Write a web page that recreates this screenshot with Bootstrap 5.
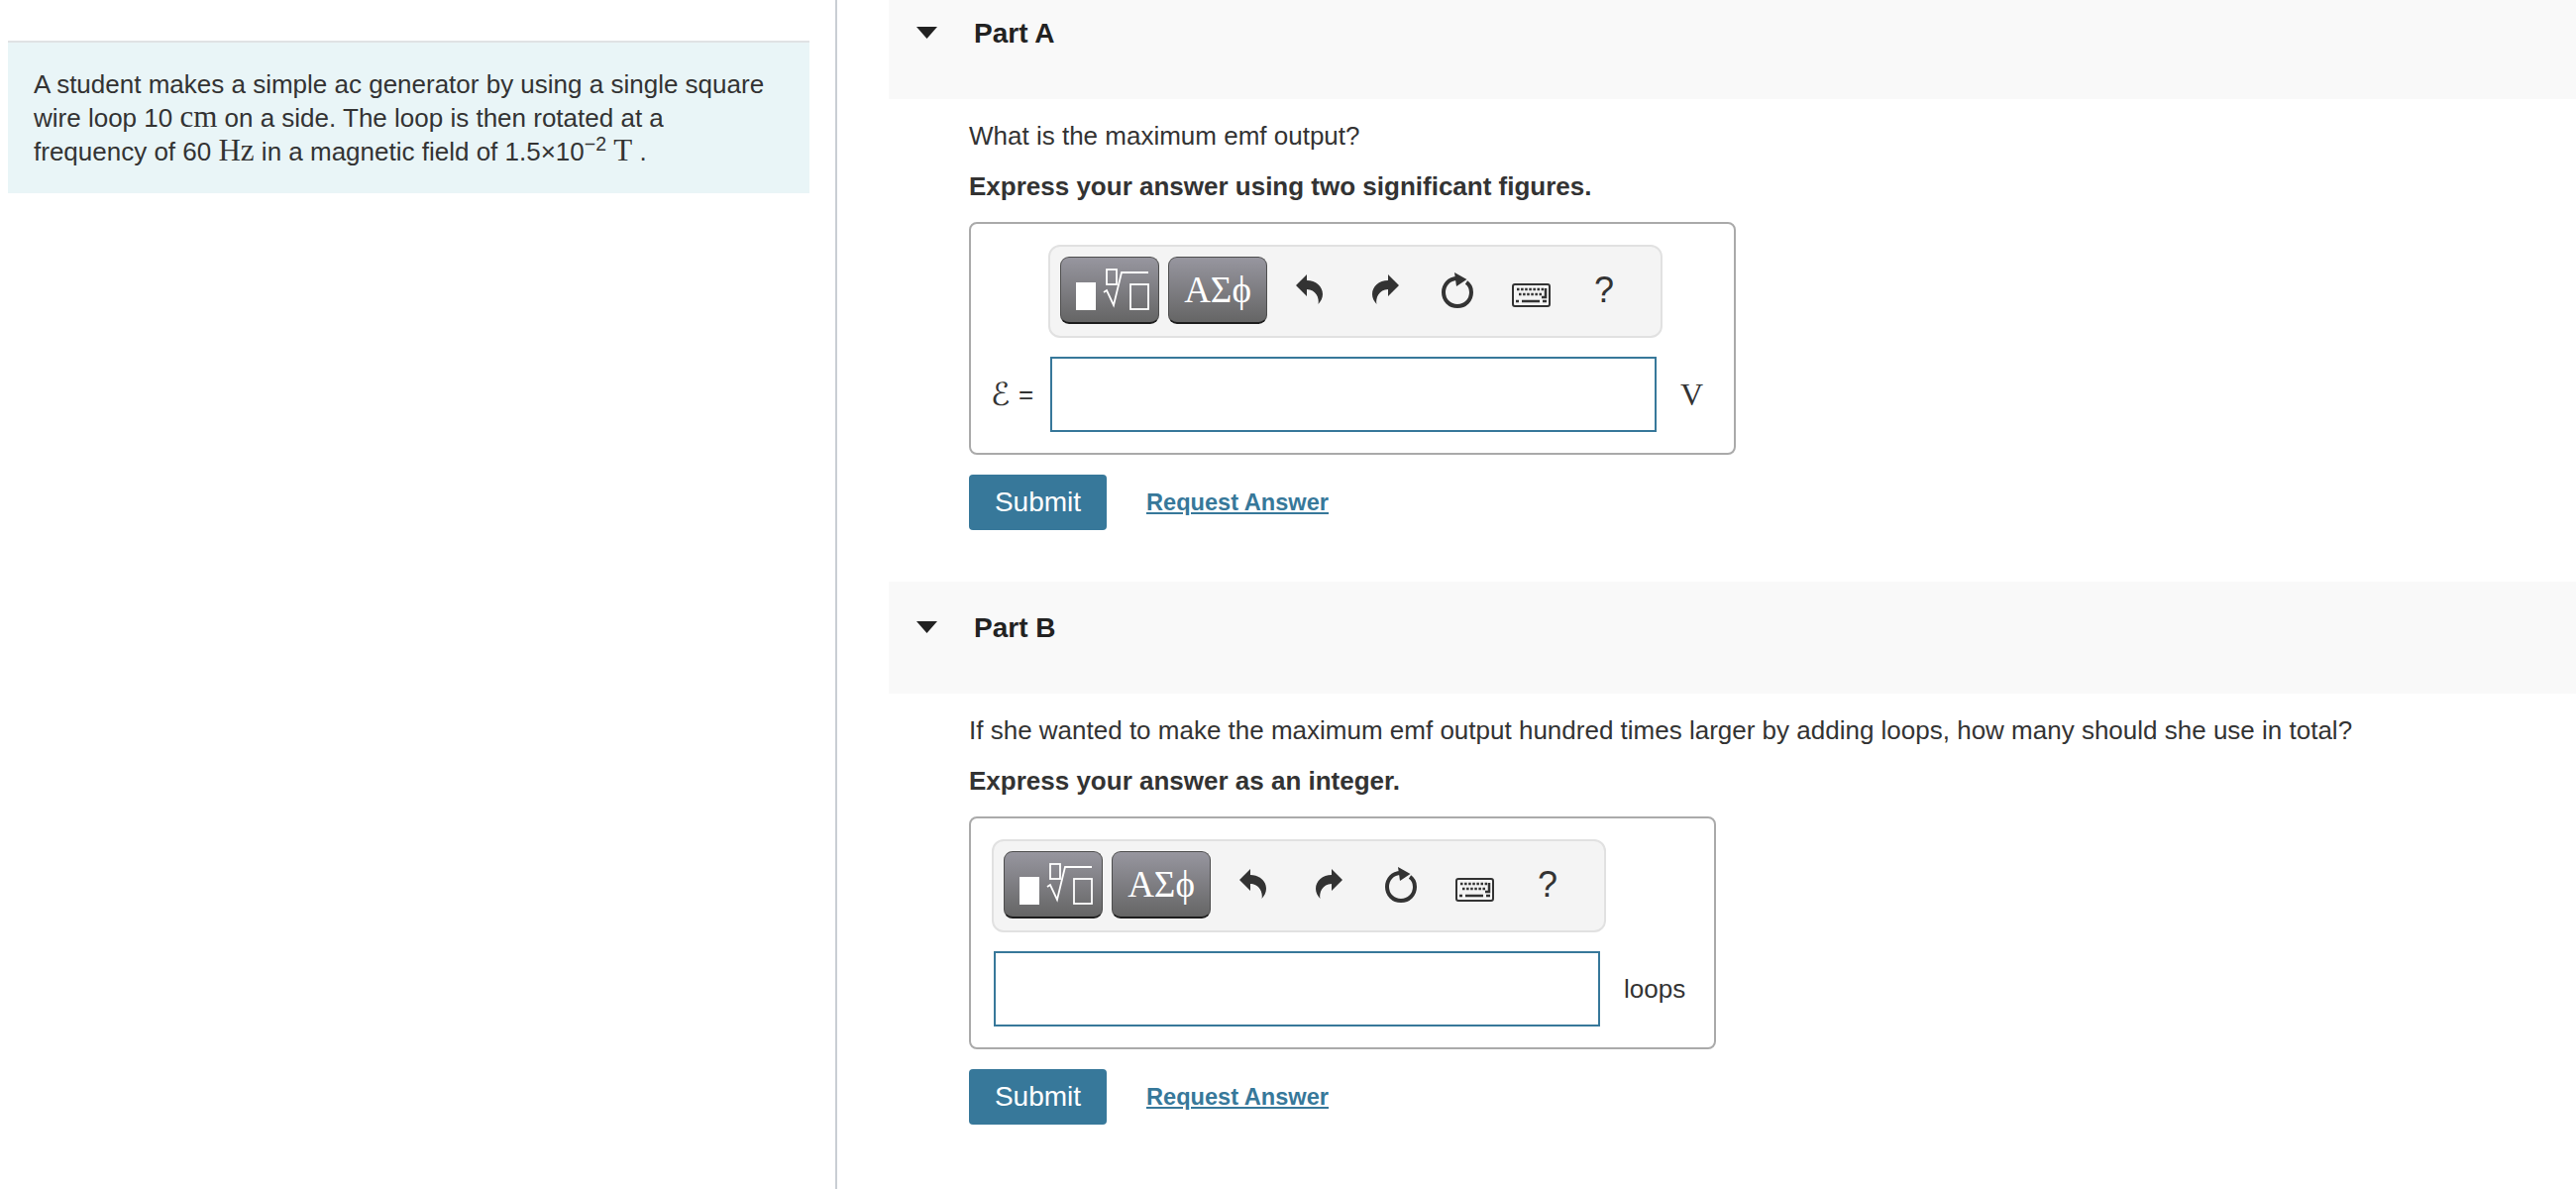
<!DOCTYPE html>
<html lang="en">
<head>
    <meta charset="UTF-8">
    <title>Part A and Part B</title>
    <link href="https://cdn.jsdelivr.net/npm/bootstrap@5.3.0/dist/css/bootstrap.min.css" rel="stylesheet">
    <style>
        body {
            font-family: "Liberation Sans", Arial, sans-serif;
            font-size: 26px;
            line-height: 34px;
            color: #333;
            background: #fff;
            height: 1200px;
            overflow: hidden;
        }
        .side-pane {
            width: 845px;
            height: 1200px;
            padding: 41px 26px 0 8px;
            border-right: 2px solid #c9ced4;
        }
        .intro-box {
            background: #e9f5f7;
            border-top: 2px solid #e0e2e4;
            height: 154px;
            padding: 25px 44px 0 26px;
        }
        .math-text { font-family: "Liberation Serif", serif; font-size: 31px; line-height: 30px; }
        .main-pane { margin-left: 52px; }
        .part-head {
            background: #f9f9f9;
            font-weight: 700;
            font-size: 28px;
            line-height: 34px;
            color: #222;
            padding-left: 28px;
            gap: 37px;
        }
        .head-a { height: 100px; padding-top: 17px; }
        .head-b { height: 113px; padding-top: 30px; margin-top: 52px; }
        .caret-icon { width: 21px; height: 12px; margin-top: 10px; }
        .part-body { padding-left: 81px; }
        .question-line { margin-top: 20px; }
        .hint-line { font-weight: 700; margin-top: 17px; }
        .answer-box {
            border: 2px solid #aaa;
            border-radius: 8px;
            margin-top: 19px;
            height: 235px;
            padding-top: 21px;
        }
        .box-a { width: 774px; }
        .box-b { width: 754px; margin-bottom: 1px; }
        .tool-tray {
            width: 620px;
            height: 94px;
            background: #f4f4f4;
            border: 2px solid #e1e1e1;
            border-radius: 12px;
            padding: 10px 0 0 10px;
            gap: 9px;
        }
        .box-a .tool-tray { margin-left: 78px; }
        .box-b .tool-tray { margin-left: 21px; }
        .tpl-btn {
            width: 100px;
            height: 68px;
            padding: 0;
            border: 1px solid #4e4e4e;
            border-bottom: 2px solid #1d1d1d;
            border-radius: 9px;
            background: linear-gradient(#97969f, #656565);
            color: #fff;
            font-family: "Liberation Serif", serif;
            font-size: 37px;
            line-height: 1;
        }
        .tpl-btn:hover { background: linear-gradient(#97969f, #656565); color: #fff; }
        .root-art { display: block; }
        .icon-undo { width: 27px; height: 30px; margin-top: 18px; margin-left: 20px; }
        .icon-redo { width: 27px; height: 30px; margin-top: 18px; margin-left: 41px; transform: scaleX(-1); }
        .icon-reload { width: 34px; height: 38px; margin-top: 16px; margin-left: 33px; }
        .icon-keys { width: 39px; height: 24px; margin-top: 27px; margin-left: 29px; }
        .help-mark { font-size: 36px; line-height: 38px; margin-top: 15px; margin-left: 35px; color: #333; }
        .input-row { margin-top: 19px; }
        .box-a .input-row { padding-left: 20px; }
        .box-b .input-row { padding-left: 23px; }
        .symbol-cell { width: 60px; gap: 6px; }
        .symbol-e { font-family: "DejaVu Sans", sans-serif; font-size: 32px; width: 22px; }
        .answer-input {
            width: 612px;
            height: 76px;
            border: 2px solid #37789a;
            border-radius: 0;
            padding: 0 10px;
            background: #fff;
            outline: none;
        }
        .unit-v { font-family: "Liberation Serif", serif; font-size: 32px; margin-left: 24px; }
        .unit-loops { margin-left: 24px; }
        .action-row { margin-top: 20px; gap: 40px; }
        .send-btn {
            width: 139px;
            height: 56px;
            padding: 0;
            background: #37789a;
            border: none;
            border-radius: 4px;
            color: #fff;
            font-size: 28px;
        }
        .send-btn:hover { background: #37789a; color: #fff; }
        .reveal-link { color: #37789a; font-weight: 700; font-size: 23.6px; text-decoration: underline; }
    </style>
</head>
<body>
    <svg class="d-none">
        <symbol id="undoShape" viewBox="0 0 27 30">
            <path fill="#333" d="M0 11 11 0V6C20 6 27 12 27 20 27 24 25 27 22.5 30 24 24 20 15 11 15V22Z"/>
        </symbol>
        <symbol id="reloadShape" viewBox="0 0 34 38">
            <path fill="none" stroke="#333" stroke-width="4" d="M17 6C8 6 3 13 3 20 3 28 9 34 17 34 25 34 31 28 31 20 31 16 29 12 26 10"/>
            <path fill="#333" d="M14 0 26.5 7 16 14Z"/>
        </symbol>
        <symbol id="keysShape" viewBox="0 0 39 24">
            <rect x="1" y="1" width="37" height="22" rx="2" fill="#f4f4f4" stroke="#333" stroke-width="2"/>
            <path stroke="#333" stroke-width="2.5" stroke-dasharray="2.5 1.6" d="M5 6H33M7 11H30"/>
            <path fill="none" stroke="#333" stroke-width="2.5" d="M34 5V14H30M10 18H28M4 18H7M31 18H35"/>
        </symbol>
        <symbol id="rootShape" viewBox="0 0 98 65">
            <rect x="15" y="25" width="20" height="28" fill="#fff"/>
            <rect x="46" y="12" width="10" height="15" fill="none" stroke="#fff" stroke-width="1.8"/>
            <path fill="none" stroke="#fff" stroke-width="1.8" d="M43 35 46 33 53 48 61 15H88"/>
            <rect x="70" y="27" width="18" height="25" fill="none" stroke="#fff" stroke-width="1.8"/>
        </symbol>
    </svg>

    <div class="d-flex">
        <div class="side-pane flex-shrink-0">
            <div class="intro-box">
                A student makes a simple ac generator by using a single square wire loop 10 <span class="math-text">cm</span> on a side. The loop is then rotated at a frequency of 60 <span class="math-text">Hz</span> in a magnetic field of 1.5×10<sup>−2</sup> <span class="math-text">T</span> .
            </div>
        </div>

        <div class="main-pane flex-grow-1">
            <div class="part-head head-a d-flex">
                <svg class="caret-icon" viewBox="0 0 21 12"><path fill="#222" d="M0 0H21L10.5 12Z"/></svg>
                <span>Part A</span>
            </div>
            <div class="part-body">
                <div class="question-line">What is the maximum emf output?</div>
                <div class="hint-line">Express your answer using two significant figures.</div>
                <div class="answer-box box-a">
                    <div class="tool-tray d-flex">
                        <button type="button" class="btn tpl-btn"><svg class="root-art" width="98" height="65"><use href="#rootShape"/></svg></button>
                        <button type="button" class="btn tpl-btn">ΑΣϕ</button>
                        <svg class="icon-undo"><use href="#undoShape"/></svg>
                        <svg class="icon-redo"><use href="#undoShape"/></svg>
                        <svg class="icon-reload"><use href="#reloadShape"/></svg>
                        <svg class="icon-keys"><use href="#keysShape"/></svg>
                        <span class="help-mark">?</span>
                    </div>
                    <div class="input-row d-flex align-items-center">
                        <div class="symbol-cell d-flex align-items-center"><span class="symbol-e">ℰ</span><span>=</span></div>
                        <input type="text" class="answer-input" aria-label="emf">
                        <span class="unit-v">V</span>
                    </div>
                </div>
                <div class="d-flex action-row align-items-center">
                    <button type="button" class="btn send-btn">Submit</button>
                    <a href="#" class="reveal-link">Request Answer</a>
                </div>
            </div>

            <div class="part-head head-b d-flex">
                <svg class="caret-icon" viewBox="0 0 21 12"><path fill="#222" d="M0 0H21L10.5 12Z"/></svg>
                <span>Part B</span>
            </div>
            <div class="part-body">
                <div class="question-line">If she wanted to make the maximum emf output hundred times larger by adding loops, how many should she use in total?</div>
                <div class="hint-line">Express your answer as an integer.</div>
                <div class="answer-box box-b">
                    <div class="tool-tray d-flex">
                        <button type="button" class="btn tpl-btn"><svg class="root-art" width="98" height="65"><use href="#rootShape"/></svg></button>
                        <button type="button" class="btn tpl-btn">ΑΣϕ</button>
                        <svg class="icon-undo"><use href="#undoShape"/></svg>
                        <svg class="icon-redo"><use href="#undoShape"/></svg>
                        <svg class="icon-reload"><use href="#reloadShape"/></svg>
                        <svg class="icon-keys"><use href="#keysShape"/></svg>
                        <span class="help-mark">?</span>
                    </div>
                    <div class="input-row d-flex align-items-center">
                        <input type="text" class="answer-input" aria-label="loops">
                        <span class="unit-loops">loops</span>
                    </div>
                </div>
                <div class="d-flex action-row align-items-center">
                    <button type="button" class="btn send-btn">Submit</button>
                    <a href="#" class="reveal-link">Request Answer</a>
                </div>
            </div>
        </div>
    </div>
</body>
</html>
